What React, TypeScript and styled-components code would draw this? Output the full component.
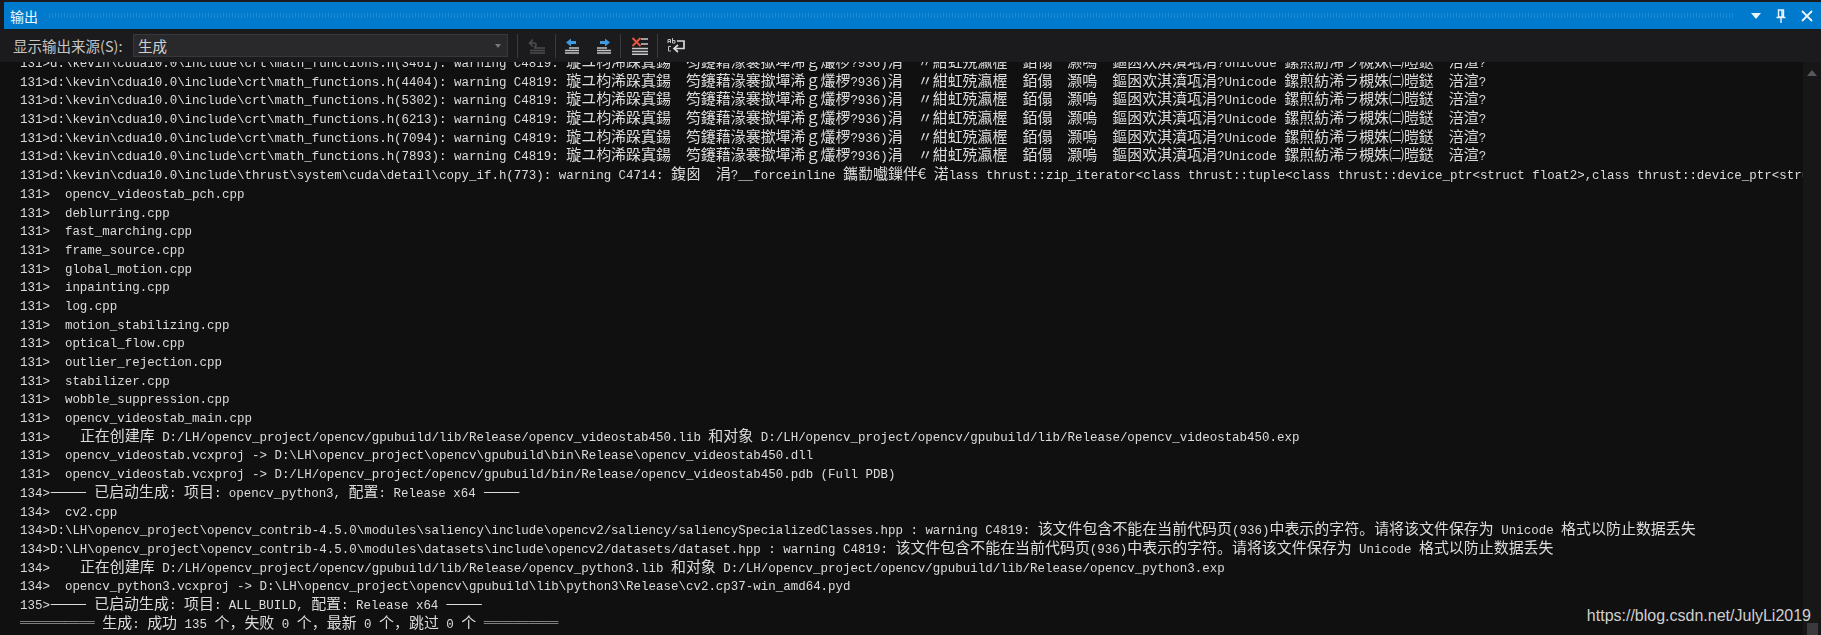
import React from "react";
import styled, { createGlobalStyle } from "styled-components";

const GlobalStyle = createGlobalStyle`
	html, body {
		margin: 0;
		padding: 0;
		background: #101011;
	}
`;

const Shell = styled.div`
	position: relative;
	width: 1821px;
	height: 635px;
	overflow: hidden;
	display: flex;
	flex-direction: column;
	background: #1b1b1d;
`;

const TitleBar = styled.div`
	height: 27px;
	margin: 2px 0 0 4px;
	padding: 0 6px;
	display: flex;
	align-items: center;
	gap: 10px;
	background: #007acc;
	color: #eef6fc;
	font: 14px "Noto Sans CJK SC", sans-serif;
`;

const Grip = styled.div`
	flex: 1;
	height: 5px;
	background-image: radial-gradient(rgba(150, 205, 240, 0.75) 0.6px, transparent 0.8px);
	background-size: 3px 2px;
`;

const TitleIcons = styled.div`
	width: 62px;
	display: flex;
	align-items: center;
	justify-content: space-between;
	margin: 0 2px 0 6px;
`;

const Toolbar = styled.div`
	height: 33px;
	padding-left: 13px;
	display: flex;
	align-items: center;
	background: #1b1b1d;
`;

const SourceLabel = styled.span`
	width: 120px;
	color: #c4c4c4;
	font: 14.5px "Noto Sans CJK SC", sans-serif;
	white-space: pre;
`;

const SourceSelect = styled.div`
	width: 375px;
	height: 23px;
	margin-right: 9px;
	padding: 0 6px 0 4px;
	box-sizing: border-box;
	display: flex;
	align-items: center;
	justify-content: space-between;
	background: #29292c;
	border: 1px solid #37373b;
	color: #d2d2d2;
	font: 14.5px "Noto Sans CJK SC", sans-serif;
`;

const SelectArrow = styled.i`
	width: 0;
	height: 0;
	border-left: 3.5px solid transparent;
	border-right: 3.5px solid transparent;
	border-top: 4px solid #77777a;
`;

const Separator = styled.i`
	width: 1px;
	height: 24px;
	background: #3b3b3f;
`;

const ToolButton = styled.span<{ $w: number }>`
	width: ${(p) => p.$w}px;
	height: 24px;
	display: flex;
	align-items: center;
	justify-content: center;
`;

const Body = styled.div`
	flex: 1;
	min-height: 0;
	display: flex;
`;

const OutputPane = styled.div`
	flex: 1;
	min-width: 0;
	overflow: hidden;
	background: #101011;
`;

const OutputList = styled.div`
	margin-top: -7px;
	padding-left: 20px;
	filter: blur(0.3px);
`;

const Row = styled.div`
	height: 18.7px;
	line-height: 18.7px;
	white-space: pre;
	color: #dcdcdc;
	font-family: "Liberation Mono", monospace;
	font-size: 12.47px;
`;

const Cjk = styled.span`
	font-family: "Noto Sans CJK SC", sans-serif;
	font-size: 14.96px;
	line-height: 0;
`;

const ScrollTrack = styled.div`
	width: 18px;
	padding-top: 8px;
	display: flex;
	justify-content: center;
	background: #171718;
`;

const ScrollUp = styled.i`
	width: 0;
	height: 0;
	border-left: 5px solid transparent;
	border-right: 5px solid transparent;
	border-bottom: 6px solid #58585c;
`;

const ScrollThumb = styled.div`
	position: absolute;
	right: 3px;
	bottom: 0;
	width: 11px;
	height: 12px;
	background: #3a3a3d;
`;

const Watermark = styled.div`
	position: absolute;
	right: 10px;
	bottom: 10px;
	color: #cfcfcf;
	font: 16px "Liberation Sans", sans-serif;
`;

const warning4819 =
	"璇ユ枃浠跺寘鍚  笉鑳藉湪褰撳墠浠ｇ爜椤?936)涓  〃紺虹殑瀛楃  銆傝  灏嗚  鏂囦欢淇濆瓨涓?Unicode 鏍煎紡浠ラ槻姝㈡暟鎹  涪渲?";
const cleanWarning =
	"warning C4819: 该文件包含不能在当前代码页(936)中表示的字符。请将该文件保存为 Unicode 格式以防止数据丢失";
const mathRow = (line: number) =>
	`131>d:\\kevin\\cdua10.0\\include\\crt\\math_functions.h(${line}): warning C4819: ${warning4819}`;
const compiled = (name: string) => `131>  ${name}`;

const lines: string[] = [
	mathRow(3461),
	mathRow(4404),
	mathRow(5302),
	mathRow(6213),
	mathRow(7094),
	mathRow(7893),
	"131>d:\\kevin\\cdua10.0\\include\\thrust\\system\\cuda\\detail\\copy_if.h(773): warning C4714: 鍑囪  涓?__forceinline 鑴勫嚱鏁伴€ 渃lass thrust::zip_iterator<class thrust::tuple<class thrust::device_ptr<struct float2>,class thrust::device_ptr<struct float2>>>",
	compiled("opencv_videostab_pch.cpp"),
	compiled("deblurring.cpp"),
	compiled("fast_marching.cpp"),
	compiled("frame_source.cpp"),
	compiled("global_motion.cpp"),
	compiled("inpainting.cpp"),
	compiled("log.cpp"),
	compiled("motion_stabilizing.cpp"),
	compiled("optical_flow.cpp"),
	compiled("outlier_rejection.cpp"),
	compiled("stabilizer.cpp"),
	compiled("wobble_suppression.cpp"),
	compiled("opencv_videostab_main.cpp"),
	"131>    正在创建库 D:/LH/opencv_project/opencv/gpubuild/lib/Release/opencv_videostab450.lib 和对象 D:/LH/opencv_project/opencv/gpubuild/lib/Release/opencv_videostab450.exp",
	"131>  opencv_videostab.vcxproj -> D:\\LH\\opencv_project\\opencv\\gpubuild\\bin\\Release\\opencv_videostab450.dll",
	"131>  opencv_videostab.vcxproj -> D:/LH/opencv_project/opencv/gpubuild/bin/Release/opencv_videostab450.pdb (Full PDB)",
	"134>——— 已启动生成: 项目: opencv_python3, 配置: Release x64 ———",
	"134>  cv2.cpp",
	`134>D:\\LH\\opencv_project\\opencv_contrib-4.5.0\\modules\\saliency\\include\\opencv2/saliency/saliencySpecializedClasses.hpp : ${cleanWarning}`,
	`134>D:\\LH\\opencv_project\\opencv_contrib-4.5.0\\modules\\datasets\\include\\opencv2/datasets/dataset.hpp : ${cleanWarning}`,
	"134>    正在创建库 D:/LH/opencv_project/opencv/gpubuild/lib/Release/opencv_python3.lib 和对象 D:/LH/opencv_project/opencv/gpubuild/lib/Release/opencv_python3.exp",
	"134>  opencv_python3.vcxproj -> D:\\LH\\opencv_project\\opencv\\gpubuild\\lib\\python3\\Release\\cv2.cp37-win_amd64.pyd",
	"135>——— 已启动生成: 项目: ALL_BUILD, 配置: Release x64 ———",
	"═════ 生成: 成功 135 个，失败 0 个，最新 0 个，跳过 0 个 ═════",
];

// wide glyphs go in their own span, two mono cells each
const renderLine = (text: string) =>
	text.split(/([^\x00-\x7F]+)/).map((part, i) => (i % 2 ? <Cjk key={i}>{part}</Cjk> : part));

const ScrollIcon = () => (
	<svg width="18" height="16" viewBox="0 0 18 16">
		<path d="M5 1.5 1.5 5 5 8.5M2 5h4a2 2 0 0 1 0 4" fill="none" stroke="#4d4d50" strokeWidth="1.6" />
		<path d="M6 10h11M2 12.5h15M2 15h15" stroke="#4d4d50" strokeWidth="1.6" />
	</svg>
);

const PrevIcon = () => (
	<svg width="16" height="16" viewBox="0 0 16 16">
		<path d="M7 0.5 2 4.5l5 4V6h5V3H7z" fill="#3f9be0" />
		<path d="M5 10h10M1 12.5h14M1 15h14" stroke="#c4c4c4" strokeWidth="1.6" />
	</svg>
);

const NextIcon = () => (
	<svg width="16" height="16" viewBox="0 0 16 16">
		<path d="M9 0.5 14 4.5l-5 4V6H4V3h5z" fill="#3f9be0" />
		<path d="M1 10h10M1 12.5h14M1 15h14" stroke="#c4c4c4" strokeWidth="1.6" />
	</svg>
);

const ClearIcon = () => (
	<svg width="17" height="18" viewBox="0 0 17 18">
		<path d="M1.5 1 9.5 9M9.5 1 1.5 9" stroke="#e8553f" strokeWidth="2" />
		<path d="M10 2h7M10 7h7M1 11.5h16M1 14.5h16M1 17.2h16" stroke="#c8c8c8" strokeWidth="1.6" />
	</svg>
);

const WrapIcon = () => (
	<svg width="19" height="17" viewBox="0 0 19 17">
		<path d="M1 6V2.5h2.5V6M1 4.5h2.5" fill="none" stroke="#c0c0c0" strokeWidth="1" />
		<path d="M5.5 1v5h2.5V3.5H5.5" fill="none" stroke="#c0c0c0" strokeWidth="1" />
		<path d="M4 9.5H1.5V14H4" fill="none" stroke="#c0c0c0" strokeWidth="1" />
		<path d="M10 4h7v7.5H8" fill="none" stroke="#d8d8d8" strokeWidth="1.7" />
		<path d="M11 8 7 11.5l4 3.5" fill="none" stroke="#d8d8d8" strokeWidth="1.7" />
	</svg>
);

const App = () => {
	return (
		<Shell>
			<GlobalStyle />
			<TitleBar>
				<span>输出</span>
				<Grip />
				<TitleIcons>
					<svg width="10" height="6" viewBox="0 0 10 6">
						<path d="M0 0h10L5 6z" fill="#eaf4fb" />
					</svg>
					<svg width="10" height="14" viewBox="0 0 10 14">
						<path d="M2.5 1h5v7h-5zM6 1v7M0.5 8.5h9M5 9v5" fill="none" stroke="#eaf4fb" strokeWidth="1.4" />
					</svg>
					<svg width="12" height="12" viewBox="0 0 12 12">
						<path d="M1 1 11 11M11 1 1 11" stroke="#eaf4fb" strokeWidth="1.8" />
					</svg>
				</TitleIcons>
			</TitleBar>
			<Toolbar>
				<SourceLabel>显示输出来源(S):</SourceLabel>
				<SourceSelect>
					生成
					<SelectArrow />
				</SourceSelect>
				<Separator />
				<ToolButton $w={37}><ScrollIcon /></ToolButton>
				<Separator />
				<ToolButton $w={32}><PrevIcon /></ToolButton>
				<ToolButton $w={32}><NextIcon /></ToolButton>
				<Separator />
				<ToolButton $w={36}><ClearIcon /></ToolButton>
				<Separator />
				<ToolButton $w={37}><WrapIcon /></ToolButton>
			</Toolbar>
			<Body>
				<OutputPane>
					<OutputList>
						{lines.map((line, i) => (
							<Row key={i}>{renderLine(line)}</Row>
						))}
					</OutputList>
				</OutputPane>
				<ScrollTrack>
					<ScrollUp />
				</ScrollTrack>
			</Body>
			<ScrollThumb />
			<Watermark>https://blog.csdn.net/JulyLi2019</Watermark>
		</Shell>
	);
};

export default App;
